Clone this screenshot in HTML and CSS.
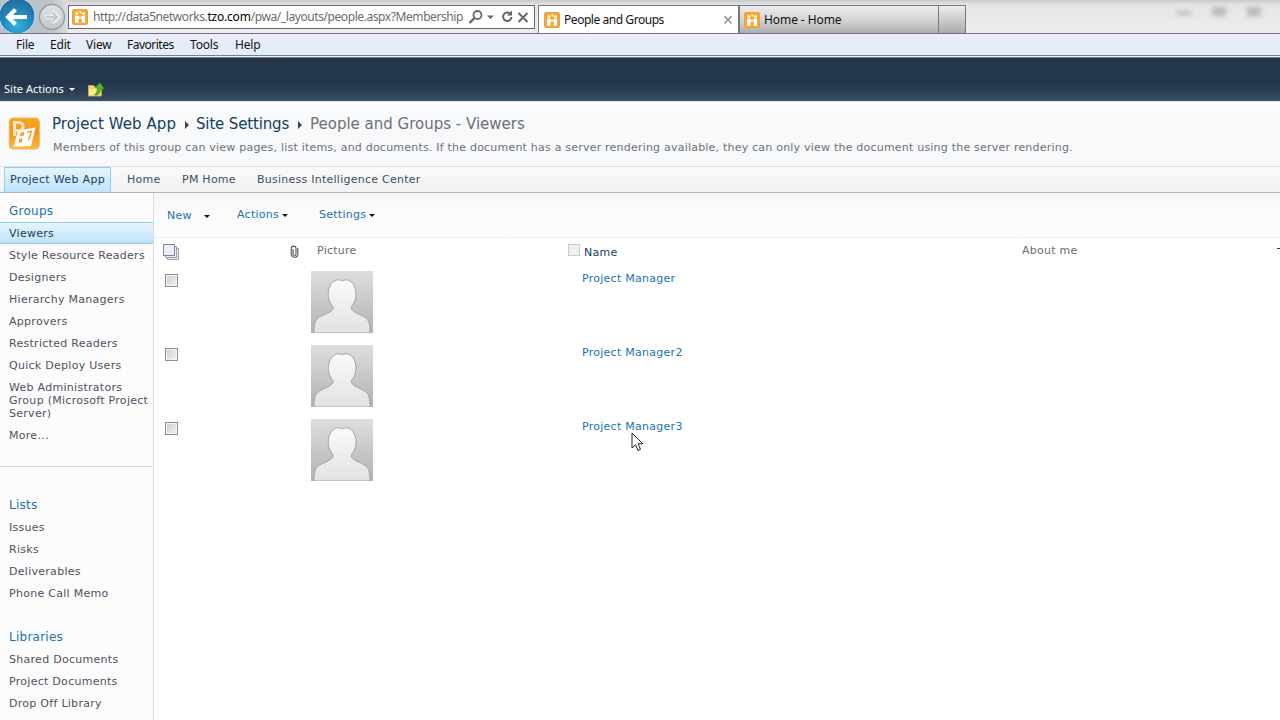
FILE: index.html
```html
<!DOCTYPE html>
<html lang="en">
<head>
<meta charset="utf-8">
<title>People and Groups</title>
<link rel="stylesheet" href="styles.css">
</head>
<body>
<svg width="0" height="0" class="defs">
  <defs>
    <linearGradient id="org" x1="0" y1="0" x2="0" y2="1"><stop offset="0" stop-color="#f5a623"/><stop offset=".5" stop-color="#f7941d"/><stop offset="1" stop-color="#fdbb3c"/></linearGradient>
    <linearGradient id="pic" x1="0" y1="0" x2="0" y2="1"><stop offset="0" stop-color="#dedede"/><stop offset="1" stop-color="#b2b2b2"/></linearGradient>
    <linearGradient id="body" x1="0" y1="0" x2="0" y2="1"><stop offset="0" stop-color="#fafafa"/><stop offset="1" stop-color="#e2e2e2"/></linearGradient>
    <radialGradient id="blue" cx=".5" cy=".75" r=".7"><stop offset="0" stop-color="#35b2dc"/><stop offset=".6" stop-color="#1f86bd"/><stop offset="1" stop-color="#2a6c9d"/></radialGradient>
    <linearGradient id="gry" x1="0" y1="0" x2="0" y2="1"><stop offset="0" stop-color="#dfe1e4"/><stop offset="1" stop-color="#c2c5ca"/></linearGradient>
    <linearGradient id="side" x1="0" y1="0" x2="1" y2="0"><stop offset="0" stop-color="#b4c0ca"/><stop offset=".75" stop-color="#bcc4cb"/><stop offset="1" stop-color="#dcdee0"/></linearGradient>
    <symbol id="fav" viewBox="0 0 16 16">
      <rect x=".5" y=".5" width="15" height="15" rx="1.500" fill="#f9a733" stroke="#e9a04a"/>
      <g fill="#fff"><circle cx="4.800" cy="4.600" r="1.400"/><circle cx="8.400" cy="3.400" r="1.100"/><circle cx="11.400" cy="4.600" r="1.400"/><path d="M3 6.800h3.800l.7 1.400h1.400l.7-1.400h3.400v7h-3.300V9.600H6.500v4.200H3z"/></g>
    </symbol>
    <symbol id="person" viewBox="0 0 62 62">
      <rect width="62" height="62" fill="url(#pic)"/>
      <path d="M3 62c0-7 .5-12 4-15 4-3 9-4 12.500-6.500 2-1.500 3-3 2.500-5-3-3-4.800-7.500-4.800-12C17.200 14.500 22 9 27.500 8.800c2-.1 2.500.9 3.700.9s2-1 4-.9C40.500 9 45 14.500 45 23.500c0 4.500-1.800 9-4.500 12-.5 2 .5 3.500 2.500 5 3.500 2.500 8 3.500 12 6.500 3.500 3 4 8 4 15z" fill="url(#body)" stroke="#a4a4a4" stroke-width="1"/>
    </symbol>
  </defs>
</svg>
<header class="browser">
  <div class="navbtns">
    <svg width="68" height="33" viewBox="0 0 68 33">
      <rect width="68" height="33" fill="url(#side)"/>
      <circle cx="17" cy="16" r="18" fill="url(#blue)" stroke="#d5e6f0"/>
      <path d="M8 17h19M15.500 9.500L8 17l7.500 7.500" fill="none" stroke="#fff" stroke-width="4"/>
      <circle cx="52" cy="17" r="12.500" fill="url(#gry)" stroke="#989da4" stroke-width="1.500"/>
      <path d="M45 17h12M52 11.500l5.500 5.500-5.500 5.500" fill="none" stroke="#f6f6f6" stroke-width="4.400"/>
      <path d="M45.500 17h11M52 12l5 5-5 5" fill="none" stroke="#c4c7cc" stroke-width="2.400"/>
    </svg>
  </div>
  <div class="address">
    <svg width="16" height="16"><use href="#fav"/></svg>
    <span class="url">http://data5networks.<b>tzo.com</b>/pwa/_layouts/people.aspx?Membership</span>
    <svg class="tools" width="66" height="18" viewBox="0 0 66 18" fill="none" stroke="#666">
      <circle cx="9.500" cy="7" r="4" stroke-width="1.800"/><path d="M6.500 10l-5 5" stroke-width="2.400"/>
      <path d="M19 7.500h7l-3.500 3.500z" fill="#666" stroke="none"/>
      <path d="M42 5.500a4.200 4.200 0 1 0 1.500 3.500" stroke-width="2"/><path d="M44 2.500v5h-5z" fill="#666" stroke="none"/>
      <path d="M50.500 5l9 9M59.500 5l-9 9" stroke-width="2"/>
    </svg>
  </div>
  <div class="tab active"><svg width="16" height="16"><use href="#fav"/></svg><span class="t1">People and Groups</span><svg class="close" width="10" height="10" viewBox="0 0 10 10"><path d="M1.500 1l7 7.500M8.500 1l-7 7.500" stroke="#999" stroke-width="1.800"/></svg></div>
  <div class="tab idle"><svg width="16" height="16"><use href="#fav"/></svg><span class="t2">Home - Home</span></div>
  <div class="tab new"></div>
  <div class="winctl"><i></i><i></i><i></i></div>
</header>
<nav class="menu"><span>File</span><span>Edit</span><span>View</span><span>Favorites</span><span>Tools</span><span>Help</span></nav>
<div class="ribbon">
  <span class="sa">Site Actions</span><i class="caret"></i>
  <svg width="17" height="15" viewBox="0 0 17 15"><path d="M.5 3.500h5l1 1.500h7v9H.5z" fill="#f2d765" stroke="#c7a93c"/><path d="M1 7h11v6.500H1z" fill="#f9e891"/><path d="M6 13c4 .5 6-2 5.800-6H15.800L11.500.8 6.800 5.500l2.200.6c0 3-1 5-3 6.900z" fill="#54b435" stroke="#3b8c27" stroke-width=".7" transform="translate(.5)"/></svg>
</div>
<section class="title">
  <svg width="32" height="34" viewBox="0 0 32 34">
    <rect x="1.300" y="1" width="30" height="31" rx="4" fill="url(#org)" stroke="#efb65c"/>
    <path d="M6.500 19V5.500h4.500a4 4 0 0 1 0 8.200H7" fill="none" stroke="#ffe7bd" stroke-width="3"/>
    <path d="M10 13.500l17.500-3-4.500 18.500-17.500.8z" fill="#fff"/>
    <path d="M13 16.500l2.500-.5-.4 2.200-2.500.4zM19 15.200l4.500-.8-3 9M11.800 22.500l2-.2-.4 2.400-2 .2z" fill="none" stroke="#f39a21" stroke-width="1.400"/>
  </svg>
  <div>
    <div class="crumbs"><a class="c1">Project Web App</a><i class="arr"></i><a class="c2">Site Settings</a><i class="arr a2"></i><span class="c3">People and Groups - Viewers</span></div>
    <p class="desc">Members of this group can view pages, list items, and documents. If the document has a server rendering available, they can only view the document using the server rendering.</p>
  </div>
</section>
<nav class="topnav"><a class="on">Project Web App</a><a class="n1">Home</a><a class="n2">PM Home</a><a class="n3">Business Intelligence Center</a></nav>
<div class="main">
  <aside>
    <h3>Groups</h3>
    <a class="sel">Viewers</a><a>Style Resource Readers</a><a>Designers</a><a>Hierarchy Managers</a><a>Approvers</a><a>Restricted Readers</a><a>Quick Deploy Users</a><a>Web Administrators<br>Group (Microsoft Project<br>Server)</a><a>More...</a>
    <hr>
    <h3>Lists</h3>
    <a>Issues</a><a>Risks</a><a>Deliverables</a><a>Phone Call Memo</a>
    <h3 class="lib">Libraries</h3>
    <a>Shared Documents</a><a>Project Documents</a><a>Drop Off Library</a>
  </aside>
  <section class="content">
    <div class="toolbar"><span class="b1">New</span><i class="caret"></i><span class="b2">Actions</span><i class="caret"></i><span class="b3">Settings</span><i class="caret"></i></div>
    <div class="row head">
      <svg width="16" height="16" viewBox="0 0 16 16"><g fill="#e9eef8" stroke="#98a0ac"><path d="M4.500 4.500h11v11h-11z"/><path d="M2.500 2.500h11v11h-11z"/><path d="M.5.500h11v11H.5z" stroke="#7484a0"/></g></svg>
      <svg class="clip" width="9" height="13" viewBox="0 0 9 13"><path d="M3 4v5a1.500 1.500 0 0 0 3 0V3.500a2.300 2.300 0 0 0-4.800 0V9a3.300 3.300 0 0 0 6.600 0V3" fill="none" stroke="#555" stroke-width="1.100"/></svg>
      <span class="hp">Picture</span>
      <span class="hn"><i></i>Name</span>
      <span class="ha">About me</span>
      <em></em>
    </div>
    <div class="row"><i class="cb"></i><svg width="62" height="62"><use href="#person"/></svg><a>Project Manager</a></div>
    <div class="row"><i class="cb"></i><svg width="62" height="62"><use href="#person"/></svg><a>Project Manager2</a></div>
    <div class="row"><i class="cb"></i><svg width="62" height="62"><use href="#person"/></svg><a>Project Manager3</a></div>
  </section>
</div>
<svg class="cursor" width="13" height="20" viewBox="0 0 13 20"><path d="M1 1v15l3.500-3.300L7 18.500l2.500-1.100L7 11.800h4.800z" fill="#fff" stroke="#222"/></svg>
</body>
</html>
```
FILE: styles.css
```css
* { box-sizing: border-box; }
body { margin: 0; width: 1280px; height: 720px; overflow: hidden; background: #fff; font: 11px/13px "DejaVu Sans", sans-serif; letter-spacing: .25px; color: #4c5661; }
svg { display: block; flex: none; }
.defs { position: absolute; }
i { display: block; flex: none; }
span, a { white-space: nowrap; }
.browser { height: 33px; display: flex; background: linear-gradient(#c9c9c9, #e6e6e6 5px, #ededed); font: 12px/16px "Noto Sans", sans-serif; letter-spacing: 0; color: #111; }
.navbtns { width: 68px; height: 33px; }
.address { width: 467px; height: 24px; margin-top: 5px; border: 1px solid #66666e; background: #fff; display: flex; align-items: center; padding-left: 3px; }
.url { width: 371px; margin-left: 5px; color: #6b6b6b; letter-spacing: -.42px; }
.url b { font-weight: 400; color: #000; letter-spacing: -.2px; }
.tools { margin-left: 5px; }
.tab { height: 28px; margin-top: 5px; border: 1px solid #77777c; border-bottom: 0; display: flex; align-items: center; padding: 0 5px; }
.tab span { margin-left: 4px; }
.t1 { letter-spacing: -.45px; }
.t2 { letter-spacing: -.08px; }
.tab.active { width: 201px; margin-left: 3px; background: #fff; }
.tab .close { margin-left: auto; }
.tab.idle { width: 200px; padding-left: 4px; background: linear-gradient(#ededed, #d2d2d2 55%, #adadad); }
.tab.new { width: 27px; border-left: 0; background: linear-gradient(#eee, #aaa); }
.winctl { margin-left: 203px; width: 110px; padding: 7px 0 0 8px; display: flex; gap: 21px; filter: blur(2.500px); }
.winctl i { width: 14px; height: 9px; background: #b8b8b8; }
.winctl i:first-child { height: 4px; margin-top: 4px; }
.menu { height: 25px; border-top: 1px solid #74707f; border-bottom: 3px double #73808f; background: linear-gradient(#ececf9, #e4eef8 50%); display: flex; padding: 3px 0 0 16px; font: 12px/16px "Noto Sans", sans-serif; letter-spacing: -.2px; color: #111; gap: 16px; }
.menu span:first-child { width: 18px; }
.menu span:nth-child(2) { width: 20px; }
.menu span:nth-child(3) { width: 25px; }
.menu span:nth-child(4) { width: 47px; letter-spacing: -.5px; }
.menu span:nth-child(5) { width: 29px; }
.ribbon { height: 43px; background: linear-gradient(#2a3643, #24364d 6px, #24364d 27px, #35495f 41px, #41566a); color: #fff; display: flex; align-items: flex-start; padding: 23px 0 0 4px; font: 11px/15px "Noto Sans", sans-serif; letter-spacing: 0; }
.sa { width: 61px; }
.ribbon svg { margin-top: 1px; }
.caret { width: 0; height: 0; border: 3px solid transparent; border-top: 3px solid #111; border-bottom: 0; }
.ribbon .caret { border-top-color: #fff; margin: 7px 13px 0 4px; }
.title { height: 66px; background: linear-gradient(#fcfdff, #f8f9fa 20px, #f7f8f9); border-bottom: 1px solid #dfe0e2; border-top: 1px solid #dde3e8; display: flex; padding: 15px 0 0 8px; }
.crumbs { display: flex; font-size: 15px; line-height: 18px; letter-spacing: 0; color: #12405e; margin: -2px 0 0 12px; }
.arr { width: 0; height: 0; border: 4px solid transparent; border-left: 4px solid #444; border-right: 0; margin: 6px 7px 0 9px; }
.a2 { margin-left: 9px; margin-right: 8px; }
.c1 { width: 124px; letter-spacing: .08px; }
.c2 { width: 93px; letter-spacing: -.15px; }
.c3 { color: #6b7078; }
.desc { margin: 8px 0 0 13px; white-space: nowrap; color: #6b7279; letter-spacing: .212px; }
.topnav { height: 26px; background: linear-gradient(#fafafa, #f2f2f2); border-bottom: 1px solid #b3b6b8; display: flex; color: #3b4f65; line-height: 26px; }
.topnav .on { width: 107px; height: 25px; margin-left: 4px; padding-left: 5px; border: 1px solid #91cdf2; border-bottom: 0; background: linear-gradient(#e5f4fd, #bfe3fb); color: #12405e; line-height: 24px; letter-spacing: .33px; }
.n1 { margin-left: 16px; width: 34px; }
.n2 { margin-left: 21px; width: 54px; }
.n3 { margin-left: 21px; }
.main { display: flex; height: 527px; }
aside { width: 154px; border-right: 1px solid #d9dde0; background: #fcfcfc; padding-top: 7px; color: #4c535c; }
aside h3 { margin: 0; font-size: 12px; font-weight: 400; line-height: 22px; height: 22px; padding-left: 9px; color: #1a72ae; }
aside a { display: block; padding: 5px 0 4px 9px; letter-spacing: .28px; }
aside .sel { height: 22px; padding-top: 4px; background: linear-gradient(#e5f5fe, #bfe3fb); border: solid #94c9ea; border-width: 1px 0; color: #12405e; }
aside hr { margin: 20px 1px 27px 0; border: 0; height: 1px; background: #d8d8d8; }
aside .lib { margin-top: 22px; }
.content { flex: 1; }
.toolbar { height: 45px; border-bottom: 1px solid #ededed; background: linear-gradient(#f5f5f5, #fafafa 14px, #fdfdfd); display: flex; padding: 15px 0 0 13px; color: #1a72ae; }
.toolbar .caret { margin-top: 6px; }
.b1 { width: 24px; padding-top: 1px; }
.b1 + .caret { margin: 7px 27px 0 13px; }
.b2 { width: 42px; }
.b2 + .caret { margin-left: 3px; margin-right: 31px; }
.b3 { width: 46px; }
.b3 + .caret { margin-left: 4px; }
.row { display: flex; height: 74px; padding-left: 11px; color: #1a72ae; }
.cb { width: 13px; height: 13px; margin: 3px 133px 0 0; border: 1px solid #8d8d8d; background: linear-gradient(135deg, #ccc, #f5f5f5); box-shadow: inset 0 0 0 1px #f4f4f4; }
.row a { margin-left: 209px; margin-top: 1px; letter-spacing: .27px; }
.head { height: 33px; padding: 5px 0 0 9px; color: #6d6d6d; }
.head svg:first-child { margin-top: 1px; }
.clip { margin: 2px 0 0 111px; }
.hp { margin: 1px 0 0 18px; width: 251px; }
.hn { display: flex; width: 454px; color: #12405e; padding-top: 3px; }
.hn i { width: 12px; height: 12px; border: 1px solid #ccc; background: #efefef; margin: -2px 4px 0 0; }
.ha { margin-top: 1px; width: 255px; }
.head em { width: 3px; height: 1px; background: #333; margin-top: 5px; }
.cursor { position: absolute; left: 631px; top: 432px; }
```
